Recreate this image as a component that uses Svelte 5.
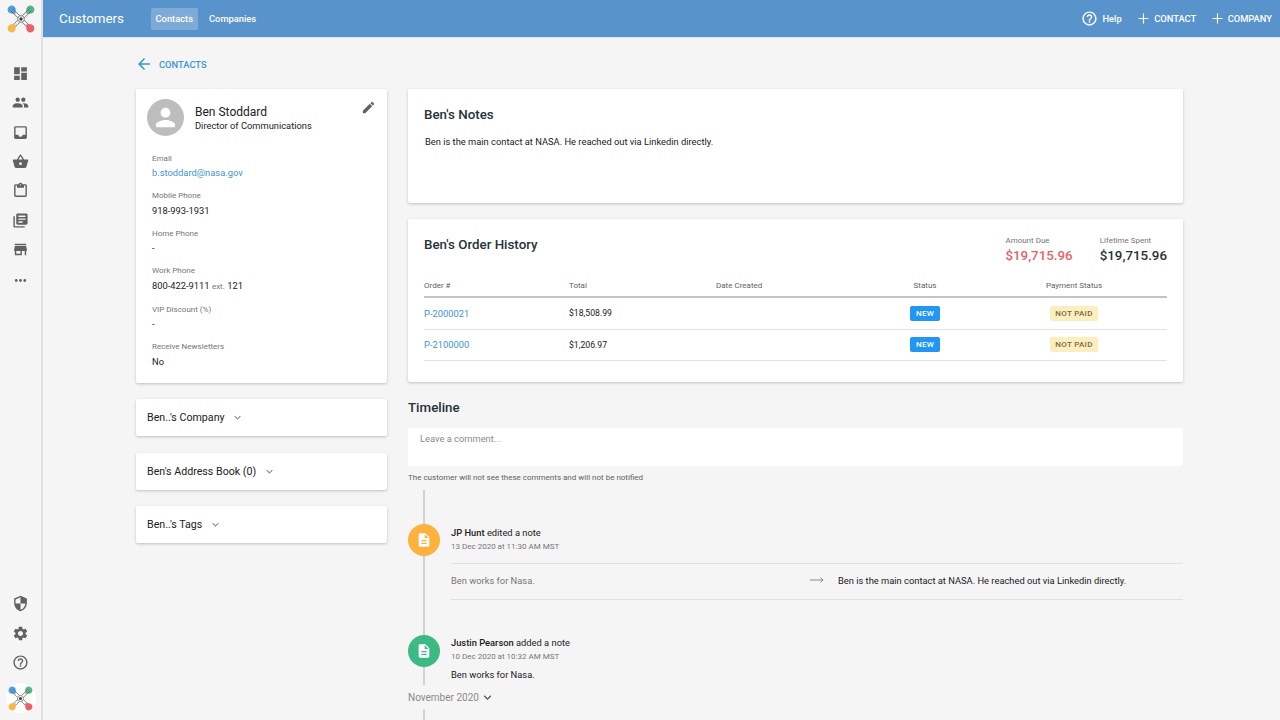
<script lang="ts">
    const icons = {
        dashboard: 'M3 13h8V3H3v10zm0 8h8v-6H3v6zm10 0h8V11h-8v10zm0-18v6h8V3h-8z',
        people: 'M16 11c1.66 0 2.99-1.34 2.99-3S17.66 5 16 5c-1.66 0-3 1.34-3 3s1.34 3 3 3zm-8 0c1.66 0 2.99-1.34 2.99-3S9.66 5 8 5C6.34 5 5 6.34 5 8s1.34 3 3 3zm0 2c-2.33 0-7 1.17-7 3.5V19h14v-2.5c0-2.33-4.67-3.5-7-3.5zm8 0c-.29 0-.62.02-.97.05 1.16.84 1.97 1.97 1.97 3.45V19h6v-2.5c0-2.33-4.67-3.5-7-3.5z',
        inbox: 'M19 3H4.99c-1.11 0-1.98.89-1.98 2L3 19c0 1.1.88 2 1.99 2H19c1.1 0 2-.9 2-2V5c0-1.11-.9-2-2-2zm0 12h-4c0 1.66-1.35 3-3 3s-3-1.34-3-3H4.99V5H19v10z',
        basket: 'M17.21 9l-4.38-6.56c-.19-.28-.51-.42-.83-.42-.32 0-.64.14-.83.43L6.79 9H2c-.55 0-1 .45-1 1 0 .09.01.18.04.27l2.54 9.27c.23.84 1 1.46 1.92 1.46h13c.92 0 1.69-.62 1.93-1.46l2.54-9.27L23 10c0-.55-.45-1-1-1h-4.79zM9 9l3-4.4L15 9H9zm3 8c-1.1 0-2-.9-2-2s.9-2 2-2 2 .9 2 2-.9 2-2 2z',
        clipboard: 'M19 3h-4.18C14.4 1.84 13.3 1 12 1c-1.3 0-2.4.84-2.82 2H5c-1.1 0-2 .9-2 2v14c0 1.1.9 2 2 2h14c1.1 0 2-.9 2-2V5c0-1.1-.9-2-2-2zm-7 0c.55 0 1 .45 1 1s-.45 1-1 1-1-.45-1-1 .45-1 1-1zm7 16H5V5h2v3h10V5h2v14z',
        library: 'M4 6H2v14c0 1.1.9 2 2 2h14v-2H4V6zm16-4H8c-1.1 0-2 .9-2 2v12c0 1.1.9 2 2 2h12c1.1 0 2-.9 2-2V4c0-1.1-.9-2-2-2zm-1 9H9V9h10v2zm-4 4H9v-2h6v2zm4-8H9V5h10v2z',
        store: 'M20 4H4v2h16V4zm1 10v-2l-1-5H4l-1 5v2h1v6h10v-6h4v6h2v-6h1zm-9 4H6v-4h6v4z',
        more: 'M6 10c-1.1 0-2 .9-2 2s.9 2 2 2 2-.9 2-2-.9-2-2-2zm12 0c-1.1 0-2 .9-2 2s.9 2 2 2 2-.9 2-2-.9-2-2-2zm-6 0c-1.1 0-2 .9-2 2s.9 2 2 2 2-.9 2-2-.9-2-2-2z',
        security: 'M12 1L3 5v6c0 5.55 3.84 10.74 9 12 5.16-1.26 9-6.45 9-12V5l-9-4zm0 10.99h7c-.53 4.12-3.28 7.79-7 8.94V12H5V6.3l7-3.11v8.8z',
        settings: 'M19.14 12.94c.04-.3.06-.61.06-.94 0-.32-.02-.64-.07-.94l2.03-1.58c.18-.14.23-.41.12-.61l-1.92-3.32c-.12-.22-.37-.29-.59-.22l-2.39.96c-.5-.38-1.03-.7-1.62-.94l-.36-2.54c-.04-.24-.24-.41-.48-.41h-3.84c-.24 0-.43.17-.47.41l-.36 2.54c-.59.24-1.13.57-1.62.94l-2.39-.96c-.22-.08-.47 0-.59.22L2.74 8.87c-.12.21-.08.47.12.61l2.03 1.58c-.05.3-.09.63-.09.94s.02.64.07.94l-2.03 1.58c-.18.14-.23.41-.12.61l1.92 3.32c.12.22.37.29.59.22l2.39-.96c.5.38 1.03.7 1.62.94l.36 2.54c.05.24.24.41.48.41h3.84c.24 0 .44-.17.47-.41l.36-2.54c.59-.24 1.13-.56 1.62-.94l2.39.96c.22.08.47 0 .59-.22l1.92-3.32c.12-.22.07-.47-.12-.61l-2.01-1.58zM12 15.6c-1.98 0-3.6-1.62-3.6-3.6s1.62-3.6 3.6-3.6 3.6 1.62 3.6 3.6-1.62 3.6-3.6 3.6z',
        help: 'M11 18h2v-2h-2v2zm1-16C6.48 2 2 6.48 2 12s4.48 10 10 10 10-4.48 10-10S17.52 2 12 2zm0 18c-4.41 0-8-3.59-8-8s3.59-8 8-8 8 3.59 8 8-3.59 8-8 8zm0-14c-2.21 0-4 1.79-4 4h2c0-1.1.9-2 2-2s2 .9 2 2c0 2-3 1.75-3 5h2c0-2.25 3-2.5 3-5 0-2.21-1.79-4-4-4z',
        edit: 'M3 17.25V21h3.75L17.81 9.94l-3.75-3.75L3 17.25zM20.71 7.04c.39-.39.39-1.02 0-1.41l-2.34-2.34c-.39-.39-1.02-.39-1.41 0l-1.83 1.83 3.75 3.75 1.83-1.83z',
        back: 'M20 11H7.83l5.59-5.59L12 4l-8 8 8 8 1.41-1.41L7.83 13H20v-2z',
        add: 'M19 12.8h-6.2V19h-1.6v-6.2H5v-1.6h6.2V5h1.6v6.2H19z',
        chevron: 'M16.59 8.59L12 13.17 7.41 8.59 6 10l6 6 6-6z',
        note: 'M14 2H6c-1.1 0-1.99.9-1.99 2L4 20c0 1.1.89 2 1.99 2H18c1.1 0 2-.9 2-2V8l-6-6zm2 16H8v-2h8v2zm0-4H8v-2h8v2zm-3-5V3.5L18.5 9H13z',
        person: 'M12 12c2.21 0 4-1.79 4-4s-1.79-4-4-4-4 1.79-4 4 1.79 4 4 4zm0 2c-2.67 0-8 1.34-8 4v1c0 .55.45 1 1 1h14c.55 0 1-.45 1-1v-1c0-2.66-5.33-4-8-4z'
    };

    const navTop = ['dashboard', 'people', 'inbox', 'basket', 'clipboard', 'library', 'store', 'more'];
    const navBottom = ['security', 'settings', 'help'];

    const orders = [
        { id: 'P-2000021', total: '$18,508.99' },
        { id: 'P-2100000', total: '$1,206.97' }
    ];

    const panels = ["Ben..'s Company", "Ben's Address Book (0)", "Ben..'s Tags"];

    // one arm of the logo per corner: angle and colour
    const petals = [
        { angle: -45, color: '#4f9fdc' },
        { angle: 45, color: '#55b585' },
        { angle: -135, color: '#f3b84f' },
        { angle: 135, color: '#e8616a' }
    ];
</script>

{#snippet icon(name, size)}
    <svg class="icon" width={size} height={size} viewBox="0 0 24 24"><path d={icons[name]} fill="currentColor" /></svg>
{/snippet}

{#snippet logo(size)}
    <svg width={size} height={size} viewBox="-14 -14 28 28">
        {#each petals as petal}
            <g transform="rotate({petal.angle})">
                <path d="M-1.5 -2V13.5M1.5 -2V13.5" stroke="#6a6a6a" stroke-width="0.8" fill="none" />
                <path d="M0 -7.5C-1.6 -9.5 -4.1 -10.6 -4.1 -13.2C-4.1 -15.6 -2.2 -17.2 0 -17.2C2.2 -17.2 4.1 -15.6 4.1 -13.2C4.1 -10.6 1.6 -9.5 0 -7.5Z" fill={petal.color} />
            </g>
        {/each}
        <circle r="3.3" fill="#fff" stroke="#6a6a6a" stroke-width="0.8" />
        <circle r="1.7" fill="#3c3c3c" />
    </svg>
{/snippet}

<div class="app">
    <aside class="sidebar">
        <div class="logo">{@render logo(28)}</div>
        <nav class="nav">
            {#each navTop as name}
                <span class="nav-item">{@render icon(name, 17)}</span>
            {/each}
        </nav>
        <nav class="nav nav-bottom">
            {#each navBottom as name}
                <span class="nav-item">{@render icon(name, 17)}</span>
            {/each}
        </nav>
        <div class="logo-bottom">{@render logo(25)}</div>
    </aside>

    <div class="page">
        <header class="topbar">
            <span class="module">Customers</span>
            <span class="tab active">Contacts</span>
            <span class="tab">Companies</span>
            <div class="actions">
                <span class="action help">{@render icon('help', 17)} Help</span>
                <span class="action">{@render icon('add', 17)} CONTACT</span>
                <span class="action">{@render icon('add', 17)} COMPANY</span>
            </div>
        </header>

        <main class="content">
            <div class="breadcrumb">
                {@render icon('back', 18)}
                <span>CONTACTS</span>
            </div>

            <div class="columns">
                <div class="left">
                    <section class="card profile">
                        <div class="profile-head">
                            <div class="avatar">{@render icon('person', 29)}</div>
                            <div class="who">
                                <div class="name">Ben Stoddard</div>
                                <div class="role">Director of Communications</div>
                            </div>
                            <span class="edit">{@render icon('edit', 15)}</span>
                        </div>
                        <dl class="fields">
                            <dt>Email</dt>
                            <dd class="link">b.stoddard@nasa.gov</dd>
                            <dt>Mobile Phone</dt>
                            <dd>918-993-1931</dd>
                            <dt>Home Phone</dt>
                            <dd>-</dd>
                            <dt>Work Phone</dt>
                            <dd>800-422-9111 <small>ext.</small> 121</dd>
                            <dt>VIP Discount (%)</dt>
                            <dd>-</dd>
                            <dt>Receive Newsletters</dt>
                            <dd>No</dd>
                        </dl>
                    </section>

                    {#each panels as panel}
                        <section class="card panel">
                            <span>{panel}</span>
                            <span class="panel-chevron">{@render icon('chevron', 13)}</span>
                        </section>
                    {/each}
                </div>

                <div class="right">
                    <section class="card notes">
                        <h2>Ben's Notes</h2>
                        <p>Ben is the main contact at NASA. He reached out via Linkedin directly.</p>
                    </section>

                    <section class="card history">
                        <div class="history-head">
                            <h2>Ben's Order History</h2>
                            <div class="totals">
                                <div class="total">
                                    <span class="total-label">Amount Due</span>
                                    <span class="total-value due">$19,715.96</span>
                                </div>
                                <div class="total">
                                    <span class="total-label">Lifetime Spent</span>
                                    <span class="total-value">$19,715.96</span>
                                </div>
                            </div>
                        </div>
                        <div class="row row-head">
                            <span>Order #</span>
                            <span>Total</span>
                            <span>Date Created</span>
                            <span class="center">Status</span>
                            <span class="center">Payment Status</span>
                        </div>
                        {#each orders as order}
                            <div class="row">
                                <span class="order-id">{order.id}</span>
                                <span>{order.total}</span>
                                <span></span>
                                <span class="center"><b class="badge new">NEW</b></span>
                                <span class="center"><b class="badge unpaid">NOT PAID</b></span>
                            </div>
                        {/each}
                    </section>

                    <h2 class="timeline-title">Timeline</h2>
                    <div class="comment">Leave a comment...</div>
                    <p class="caption">The customer will not see these comments and will not be notified</p>

                    <div class="timeline">
                        <article class="event">
                            <span class="dot orange">{@render icon('note', 16)}</span>
                            <div class="event-body">
                                <div class="event-title"><strong>JP Hunt</strong> edited a note</div>
                                <div class="event-date">13 Dec 2020 at 11:30 AM MST</div>
                                <div class="diff">
                                    <span class="old">Ben works for Nasa.</span>
                                    <svg class="diff-arrow" width="14" height="6" viewBox="0 0 14 6"><path d="M0 3h13M10.5 .8L13 3l-2.5 2.2" fill="none" stroke="#8a8a8a" stroke-width="1" /></svg>
                                    <span class="new-text">Ben is the main contact at NASA. He reached out via Linkedin directly.</span>
                                </div>
                            </div>
                        </article>

                        <article class="event second">
                            <span class="dot green">{@render icon('note', 16)}</span>
                            <div class="event-body">
                                <div class="event-title"><strong>Justin Pearson</strong> added a note</div>
                                <div class="event-date">10 Dec 2020 at 10:32 AM MST</div>
                                <div class="event-text">Ben works for Nasa.</div>
                            </div>
                        </article>

                        <div class="month">November 2020 {@render icon('chevron', 15)}</div>
                    </div>
                </div>
            </div>
        </main>
    </div>
</div>

<style>
    :global(body) {
        margin: 0;
        background: #f5f5f5;
        overflow: hidden;
    }

    .app {
        display: flex;
        height: 720px;
        overflow: hidden;
        font-family: Roboto, "Liberation Sans", sans-serif;
        font-size: 9.33px;
        color: #212121;
        background: #f5f5f5;
    }

    .icon {
        display: block;
        flex: none;
    }

    .sidebar {
        width: 41px;
        flex: none;
        display: flex;
        flex-direction: column;
        align-items: center;
        border-right: 2px solid #e0e0e0;
        color: #616161;
    }

    .logo {
        height: 38px;
        display: flex;
        align-items: center;
        justify-content: center;
    }

    .logo svg {
        display: block;
    }

    .nav {
        display: flex;
        flex-direction: column;
        margin-top: 21px;
    }

    .nav-item {
        height: 29.3px;
        display: flex;
        align-items: center;
        justify-content: center;
    }

    .nav-item:nth-child(8) {
        padding-top: 2px;
    }

    .nav-bottom {
        margin-top: auto;
    }

    .logo-bottom {
        width: 30px;
        height: 30px;
        margin: 6px 0 7px;
        border-radius: 50%;
        background: #fff;
        display: flex;
        align-items: center;
        justify-content: center;
    }

    .page {
        flex: 1;
        min-width: 0;
    }

    .topbar {
        height: 37px;
        background: #5993cb;
        color: #fff;
        display: flex;
        align-items: center;
        padding: 0 8px 0 16px;
        border-bottom: 1px solid #d5e5f3;
    }

    .module {
        font-size: 13.33px;
        width: 92px;
    }

    .tab {
        font-size: 9.33px;
        font-weight: 500;
        padding: 0 4.5px;
        height: 22px;
        line-height: 22px;
        border-radius: 2px;
        margin-right: 7px;
    }

    .tab.active {
        background: rgba(255, 255, 255, 0.22);
    }

    .actions {
        margin-left: auto;
        display: flex;
        align-items: center;
        gap: 12.5px;
    }

    .action {
        display: flex;
        align-items: center;
        gap: 2px;
        font-size: 9.33px;
        font-weight: 500;
    }

    .action.help {
        gap: 4.5px;
        margin-right: 1px;
    }

    .content {
        padding: 19px 97px 0 93px;
    }

    .breadcrumb {
        display: flex;
        align-items: center;
        gap: 6px;
        height: 14px;
        margin-left: -1px;
        color: #3d93d6;
        font-size: 9.33px;
        font-weight: 500;
    }

    .columns {
        display: flex;
        gap: 21px;
        margin-top: 18px;
        align-items: flex-start;
    }

    .left {
        width: 251px;
        flex: none;
    }

    .right {
        flex: 1;
        min-width: 0;
    }

    .card {
        background: #fff;
        box-shadow: 0 1px 3px rgba(0, 0, 0, 0.22);
        border-radius: 2px;
    }

    .profile {
        height: 293.5px;
        box-sizing: border-box;
        padding: 10px 16px 0 11px;
    }

    .profile-head {
        display: flex;
        align-items: flex-start;
    }

    .avatar {
        width: 37px;
        height: 37px;
        border-radius: 50%;
        background: #bdbdbd;
        color: #fff;
        display: flex;
        align-items: center;
        justify-content: center;
    }

    .who {
        margin: 6px 0 0 11px;
        flex: 1;
    }

    .name {
        font-size: 12px;
        line-height: 15px;
    }

    .role {
        font-size: 9.33px;
        line-height: 11px;
    }

    .edit {
        color: #616161;
        margin: 1px -5px 0 0;
    }

    .fields {
        margin: 16.5px 0 0 5px;
    }

    .fields dt {
        font-size: 8px;
        line-height: 12px;
        color: #757575;
    }

    .fields dd {
        margin: 0.5px 0 10px;
        font-size: 9.33px;
        line-height: 15px;
    }

    .fields small {
        font-size: 8px;
        color: #757575;
    }

    .link {
        color: #3d93d6;
    }

    .panel {
        height: 37px;
        margin-top: 16.5px;
        padding: 0 11px;
        display: flex;
        align-items: center;
        gap: 6.5px;
        font-size: 10.67px;
    }

    .panel-chevron {
        color: #8a8a8a;
    }

    .notes {
        height: 114px;
        box-sizing: border-box;
        padding: 17px 16px 0;
    }

    h2 {
        margin: 0;
        font-size: 13.33px;
        line-height: 18px;
        font-weight: 500;
        color: #263238;
    }

    .notes p {
        margin: 10px 0 0 1px;
        font-size: 9.33px;
        line-height: 15px;
    }

    .history {
        height: 163px;
        box-sizing: border-box;
        margin-top: 16px;
        padding: 0 16px;
    }

    .history-head {
        display: flex;
        justify-content: space-between;
        height: 60px;
        padding-top: 17px;
        box-sizing: border-box;
    }

    .totals {
        display: flex;
        gap: 27px;
        margin-top: -2px;
    }

    .total {
        display: flex;
        flex-direction: column;
    }

    .total-label {
        font-size: 8px;
        line-height: 13px;
        color: #757575;
    }

    .total-value {
        font-size: 13.33px;
        line-height: 17px;
        font-weight: 500;
        color: #263238;
    }

    .total-value.due {
        color: #e8616a;
    }

    .row {
        display: grid;
        grid-template-columns: 145px 147px 153px 112px 186px;
        align-items: center;
        height: 31.5px;
        box-sizing: border-box;
        border-bottom: 1px solid #e0e0e0;
        font-size: 8.67px;
    }

    .row-head {
        height: 19px;
        padding-bottom: 5px;
        border-bottom: 2px solid #c4c4c4;
        font-size: 8px;
        color: #616161;
    }

    .center {
        text-align: center;
    }

    .order-id {
        color: #3d93d6;
        font-size: 9.33px;
    }

    .badge {
        display: inline-block;
        height: 15px;
        line-height: 15px;
        padding: 0 5.5px;
        border-radius: 2px;
        font-size: 8px;
        font-weight: 500;
        letter-spacing: 0.3px;
    }

    .badge.new {
        background: #2196f3;
        color: #fff;
    }

    .badge.unpaid {
        background: #fdeec0;
        color: #7a6a3f;
    }

    .timeline-title {
        margin-top: 17px;
    }

    .comment {
        height: 38px;
        box-sizing: border-box;
        margin-top: 11px;
        padding: 5px 12px;
        background: #fff;
        border-radius: 2px;
        font-size: 9.33px;
        color: #8a8a8a;
    }

    .caption {
        margin: 6px 0 0;
        font-size: 8px;
        line-height: 12px;
        color: #616161;
    }

    .timeline {
        position: relative;
        padding-top: 40px;
    }

    .timeline::before {
        content: '';
        position: absolute;
        left: 15px;
        top: 6px;
        bottom: -100px;
        width: 2px;
        background: #d2d2d2;
    }

    .event {
        position: relative;
        display: flex;
        gap: 11px;
    }

    .dot {
        width: 32px;
        height: 32px;
        flex: none;
        border-radius: 50%;
        display: flex;
        align-items: center;
        justify-content: center;
        color: #fff;
    }

    .dot.orange {
        background: #fdb23e;
    }

    .dot.green {
        background: #3dba84;
    }

    .event-body {
        flex: 1;
        min-width: 0;
        padding-top: 2px;
    }

    .second .event-body {
        padding-top: 1px;
    }

    .event-title {
        font-size: 9.33px;
        line-height: 14px;
    }

    .event-title strong {
        font-weight: 500;
    }

    .event-date {
        font-size: 8px;
        line-height: 13px;
        color: #757575;
    }

    .diff {
        display: grid;
        grid-template-columns: 359px 28px 1fr;
        align-items: center;
        height: 37px;
        box-sizing: border-box;
        padding-bottom: 3px;
        margin-top: 10px;
        border-top: 1px solid #e0e0e0;
        border-bottom: 1px solid #e0e0e0;
        font-size: 9.33px;
    }

    .old {
        color: #757575;
    }

    .second {
        margin-top: 35px;
    }

    .event-text {
        font-size: 9.33px;
        line-height: 14px;
        margin-top: 5px;
    }

    .month {
        position: relative;
        display: flex;
        align-items: center;
        gap: 1px;
        height: 24px;
        margin-top: 3px;
        background: #f5f5f5;
        font-size: 10px;
        color: #8a8a8a;
    }

    .month .icon {
        color: #555;
    }
</style>
